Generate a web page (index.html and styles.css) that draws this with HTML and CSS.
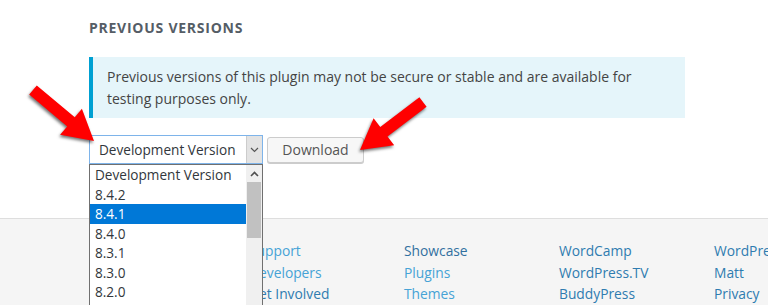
FILE: index.html
```html
<!DOCTYPE html>
<html lang="en">

<head>
    <meta charset="UTF-8">
    <meta name="viewport" content="width=device-width, initial-scale=1.0">
    <title>Previous Versions</title>
    <link rel="stylesheet" href="styles.css">
</head>

<body>
    <main class="plugin-section">
        <h2 class="section-title">Previous Versions</h2>

        <div class="notice notice-info">
            <p>Previous versions of this plugin may not be secure or stable and are available for testing purposes only.</p>
        </div>

        <div class="version-picker">
            <div class="select-box">
                <span class="select-value">Development Version</span>
                <span class="select-arrow">
                    <svg width="9" height="6" viewBox="0 0 9 6"><path d="M1 1l3.5 3.5L8 1" fill="none" stroke="#555" stroke-width="1.2"/></svg>
                </span>

                <!-- lista aberta do select -->
                <div class="select-list">
                    <ul class="select-options">
                        <li>Development Version</li>
                        <li>8.4.2</li>
                        <li class="selected">8.4.1</li>
                        <li>8.4.0</li>
                        <li>8.3.1</li>
                        <li>8.3.0</li>
                        <li>8.2.0</li>
                    </ul>
                    <div class="scrollbar">
                        <span class="scroll-up">
                            <svg width="9" height="6" viewBox="0 0 9 6"><path d="M1 5l3.5-3.5L8 5" fill="none" stroke="#505050" stroke-width="1.6"/></svg>
                        </span>
                        <span class="scroll-thumb"></span>
                    </div>
                </div>
            </div>
            <button type="button" class="btn-download">Download</button>
        </div>
    </main>

    <footer class="site-footer">
        <div class="footer-links">
            <ul>
                <li><a href="#" class="light">Support</a></li>
                <li><a href="#" class="light">Developers</a></li>
                <li><a href="#">Get Involved</a></li>
            </ul>
            <ul>
                <li><a href="#" class="dark">Showcase</a></li>
                <li><a href="#" class="light">Plugins</a></li>
                <li><a href="#" class="light">Themes</a></li>
            </ul>
            <ul>
                <li><a href="#">WordCamp</a></li>
                <li><a href="#">WordPress.TV</a></li>
                <li><a href="#">BuddyPress</a></li>
            </ul>
            <ul>
                <li><a href="#">WordPress.org</a></li>
                <li><a href="#">Matt</a></li>
                <li><a href="#">Privacy</a></li>
            </ul>
        </div>
    </footer>

    <!-- setas vermelhas da anotação -->
    <svg class="annotations" width="768" height="305" viewBox="0 0 768 305">
        <polygon class="arrow" points="29.2,94.6 67.2,126.4 60.1,134.8 94,141 81.9,108.8 74.8,117.2 36.8,85.4"/>
        <polygon class="arrow" points="419.4,97.2 380.3,127 373.6,118.3 360,150 394.2,145.3 387.5,136.6 426.6,106.8"/>
    </svg>
</body>

</html>
```

FILE: styles.css
```css
body {
    font-family: "Open Sans", Arial, sans-serif;
    background-color: #fff;
    color: #32373c;
    margin: 0;
    padding: 0;
    width: 768px;
    height: 305px;
    overflow: hidden;
    position: relative;
}

.plugin-section {
    padding: 19px 0 0 89px;
    height: 218px;
    box-sizing: border-box;
}

.section-title {
    margin: 0;
    font-size: 14px;
    line-height: 18px;
    font-weight: 700;
    text-transform: uppercase;
    letter-spacing: 0.75px;
    color: #555d66;
}

.notice {
    margin-top: 20px;
    width: 596px;
    box-sizing: border-box;
    border-left: 4px solid #00a0d2;
    background-color: #e5f5fa;
    padding: 9px 16px 8px 14px;
}

.notice p {
    margin: 0;
    font-size: 14px;
    line-height: 22px;
    color: #444;
}

.version-picker {
    margin-top: 17px;
    display: flex;
    align-items: center;
    gap: 4px;
}

.select-box {
    position: relative;
    width: 174px;
    height: 29px;
    box-sizing: border-box;
    border: 1px solid #7eb4ea;
    background-color: #fff;
    display: flex;
    align-items: center;
    justify-content: space-between;
}

.select-value {
    padding-left: 9px;
    font-size: 13.6px;
    color: #32373c;
}

.select-arrow {
    width: 15px;
    height: 100%;
    background-color: #e3e3e3;
    border-left: 1px solid #ccc;
    display: flex;
    align-items: center;
    justify-content: center;
}

.select-list {
    position: absolute;
    top: 28px;
    left: -1px;
    width: 174px;
    height: 160px;
    box-sizing: border-box;
    border: 1px solid #707070;
    border-bottom: none;
    background-color: #fff;
    display: flex;
    z-index: 2;
}

.select-options {
    list-style: none;
    margin: 0;
    padding: 0;
    flex: 1;
}

.select-options li {
    padding-left: 5px;
    font-size: 13.6px;
    line-height: 19.5px;
    color: #32373c;
}

.select-options li.selected {
    background-color: #0078d7;
    color: #fff;
}

.scrollbar {
    width: 16px;
    background-color: #f0f0f0;
    display: flex;
    flex-direction: column;
    align-items: center;
}

.scroll-up {
    height: 17px;
    display: flex;
    align-items: center;
}

.scroll-thumb {
    width: 14px;
    height: 56px;
    background-color: #c1c1c1;
}

.btn-download {
    width: 97px;
    height: 26px;
    font-family: inherit;
    font-size: 14px;
    color: #555;
    background-color: #f7f7f7;
    border: 1px solid #ccc;
    border-radius: 3px;
    box-shadow: 0 1px 0 #ccc;
    padding: 0;
}

.site-footer {
    height: 87px;
    box-sizing: border-box;
    border-top: 1px solid #dedede;
    background-color: #f5f5f5;
    padding: 21px 0 0 249px;
    overflow: hidden;
}

.footer-links {
    display: grid;
    grid-template-columns: repeat(4, 155px);
}

.footer-links ul {
    list-style: none;
    margin: 0;
    padding: 0;
}

.footer-links li {
    font-size: 13.8px;
    line-height: 21.5px;
    white-space: nowrap;
}

.footer-links a {
    color: #2f7cb0;
    text-decoration: none;
}

.footer-links a.light {
    color: #46a3d6;
}

.footer-links a.dark {
    color: #3270a0;
}

.annotations {
    position: absolute;
    top: 0;
    left: 0;
    pointer-events: none;
    z-index: 5;
}

.arrow {
    fill: #f00;
    filter: drop-shadow(-1px 2px 1.5px rgba(0, 0, 0, 0.55));
}
```
